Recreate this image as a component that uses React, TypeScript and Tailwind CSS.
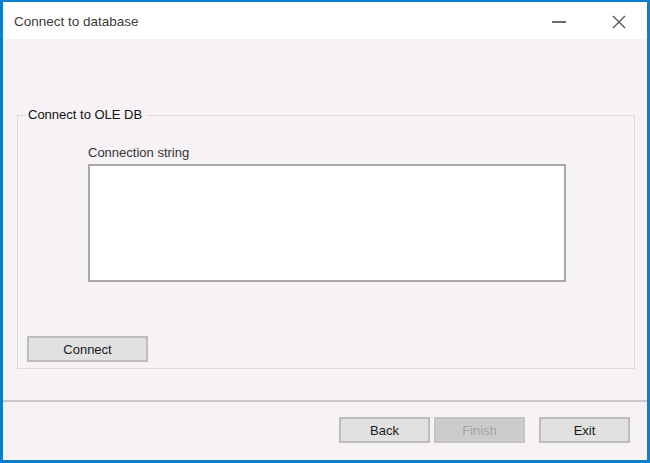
import React from "react";

const font = { fontFamily: '"Segoe UI", "Liberation Sans", Arial, sans-serif' };

function Btn({ label, disabled, className = "" }: { label: string; disabled?: boolean; className?: string }) {
  return (
    <div
      className={
        "flex h-[26px] items-center justify-center border-2 text-[13px] leading-none " +
        (disabled
          ? "border-[#c4c4c4] bg-[#cccccc] text-[#a3a3a3] "
          : "border-[#bdbdbd] bg-[#e1e1e1] text-[#1a1a1a] ") +
        className
      }
    >
      {label}
    </div>
  );
}

export default function App() {
  return (
    <div
      className="flex h-[463px] w-[650px] flex-col border-[3px] border-t-[2px] border-b-[3px] border-[#0a7fcb] bg-[#f6f2f6]"
      style={font}
    >
      {/* title bar */}
      <div className="flex h-[37px] shrink-0 items-center bg-white pl-[11px] pt-[3px]">
        <span className="text-[13.5px] text-[#3c3c3c]">Connect to database</span>
        <div className="ml-auto flex items-center">
          <div className="mr-[46px] h-[1.5px] w-[14px] bg-[#6b6b6b]" />
          <svg width="14" height="14" viewBox="0 0 14 14" className="mr-[21px]">
            <path d="M1 1 L13 13 M13 1 L1 13" stroke="#555" strokeWidth="1.4" />
          </svg>
        </div>
      </div>

      {/* content */}
      <div className="flex flex-1 flex-col">
        <div className="relative ml-[14px] mt-[76px] h-[254px] w-[618px] border border-[#dcdcdc]">
          <span className="absolute left-[9px] top-[-10px] bg-[#f6f2f6] pl-[1px] pr-[4px] text-[13px] leading-[18px] text-[#111]">
            Connect to OLE DB
          </span>
          <div className="flex h-full flex-col pl-[70px] pt-[29px]">
            <div className="text-[13px] leading-[16px] text-[#333]">Connection string</div>
            <div className="mt-[3px] h-[118px] w-[478px] border-2 border-[#a8a8a8] bg-white" />
          </div>
          <Btn label="Connect" className="absolute bottom-[6px] left-[9px] w-[121px]" />
        </div>

        <div className="mt-[31px] h-[2px] w-full bg-[#c9c9c9]" />

        <div className="flex justify-end pr-[17px] pt-[15px]">
          <Btn label="Back" className="w-[91px]" />
          <Btn label="Finish" disabled className="ml-[4px] w-[91px]" />
          <Btn label="Exit" className="ml-[14px] w-[91px]" />
        </div>
      </div>
    </div>
  );
}
